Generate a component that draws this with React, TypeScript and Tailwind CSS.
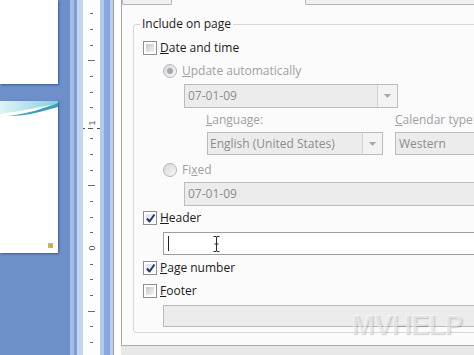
import React from 'react';

const Check = ({ checked }: { checked?: boolean }) => (
  <span className="relative flex h-[14px] w-[14px] shrink-0 border border-[#8e8f8f] bg-white p-[2px]">
    <span
      className={`h-full w-full ${
        checked ? 'bg-linear-to-br from-[#d9e2ee] to-[#f7f9fb]' : 'bg-linear-to-br from-[#c3c8cf] to-[#f3f4f5]'
      }`}
    />
    {checked && (
      <svg className="absolute left-[1px] top-[1px]" width="11" height="11" viewBox="0 0 11 11">
        <path d="M2 5.5 L4.5 8.5 L9.5 1.5" fill="none" stroke="#24356b" strokeWidth="2" strokeLinejoin="round" />
      </svg>
    )}
  </span>
);

const Radio = ({ on }: { on?: boolean }) => (
  <span className="flex h-[14px] w-[14px] shrink-0 items-center justify-center rounded-full border border-[#b4b6b9] bg-linear-to-br from-[#d6d8db] to-[#f8f8f8]">
    {on && <span className="h-[6px] w-[6px] rounded-full bg-[#a3a7ac]" />}
  </span>
);

const Arrow = () => (
  <span className="flex w-[20px] shrink-0 items-center justify-center border-l border-[#d3d3d3] bg-[#f3f3f3]">
    <svg width="7" height="4" viewBox="0 0 7 4">
      <path d="M0 0 H7 L3.5 4 Z" fill="#a6a6a6" />
    </svg>
  </span>
);

const Ruler = () => {
  const ticks = [];
  for (let k = -6; k <= 15; k++) {
    if (k === 0 || k === 8) continue;
    const y = Math.round(248 - k * 15.65) + 0.5;
    const long = k === 4 || k === 12 || k === -4;
    ticks.push(
      <line key={k} x1={long ? 5 : 7} x2={long ? 12 : 10} y1={y} y2={y} stroke="#6b6b6b" strokeWidth="1" />
    );
  }
  return (
    <svg width="17" height="355" className="shrink-0">
      <rect width="17" height="355" fill="#fcfdfe" />
      {ticks}
      <text x="0" y="0" transform="translate(12 123) rotate(-90)" fontSize="9" fill="#555" fontFamily="Liberation Sans, sans-serif" textAnchor="middle">
        1
      </text>
      <path d="M0 128.5 H2 M5 128.5 H10 M14 128.5 H17" stroke="#555" strokeWidth="1" />
      <text x="0" y="0" transform="translate(12 248) rotate(-90)" fontSize="9" fill="#555" fontFamily="Liberation Sans, sans-serif" textAnchor="middle">
        0
      </text>
    </svg>
  );
};

const dim = 'text-[#a0a0a0]';

export default function App() {
  return (
    <div className="relative flex h-[355px] w-[474px] overflow-hidden bg-[#fbfbfb] font-['Open_Sans','Noto_Sans',sans-serif] text-[12px] leading-[16px] text-[#1b1b1b]">
      {/* slide thumbnails */}
      <div className="flex w-[70px] shrink-0 flex-col bg-[#6d8fca]">
        <div className="h-[84px] w-[58px] bg-white shadow-[1px_1px_2px_rgba(20,40,90,0.5)]" />
        <div className="relative mt-[17px] h-[152px] w-[58px] overflow-hidden bg-white shadow-[1px_1px_2px_rgba(20,40,90,0.5)]">
          <svg width="58" height="20" viewBox="0 0 58 20">
            <defs>
              <linearGradient id="wv" x1="0" x2="1" y1="0" y2="0">
                <stop offset="0" stopColor="#dff4f7" />
                <stop offset="1" stopColor="#86cfdf" />
              </linearGradient>
            </defs>
            <path d="M0 0 H58 V3 C42 5 24 10 0 13 Z" fill="url(#wv)" />
            <path d="M8 15 C28 13 44 7 58 2 V6 C44 10 28 15 8 15 Z" fill="#3b9fbb" />
          </svg>
          <span className="absolute bottom-[5px] right-[5px] h-[5px] w-[5px] rounded-[1px] bg-[#c9b24a]" />
        </div>
      </div>
      <div className="w-[4px] shrink-0 bg-[#a3bde5]" />
      <div className="w-[3px] shrink-0 bg-[#7c9dd5]" />
      <div className="w-[6px] shrink-0 bg-[#c3d5ef]" />
      <Ruler />
      <div className="w-[4px] shrink-0 bg-[#b5cbeb]" />
      <div className="w-[6px] shrink-0 bg-[#86a8dd]" />
      <div className="w-[3px] shrink-0 bg-[#b9cdec]" />

      {/* dialog */}
      <div className="w-[1px] shrink-0 bg-[#9d9d9d]" />
      <div className="w-[7px] shrink-0 bg-white" />
      <div className="flex min-w-0 flex-1 flex-col">
        <div className="flex h-[346px] flex-col border-b border-l border-[#a9a9a9] bg-[#fbfbfb]">
          <div className="flex h-[5px]">
            <div className="w-[50px] rounded-b-[2px] border-x border-b border-[#b3b3b3] bg-[#f0f0f0]" />
            <div className="ml-[133px] flex-1 rounded-bl-[2px] border-b border-l border-[#b3b3b3] bg-[#f0f0f0]" />
          </div>

          {/* Include on page group */}
          <div className="relative -mr-[20px] ml-[11px] mt-[19px] flex h-[309px] flex-col rounded-[3px] border border-[#d6d6d6]">
            <span className="absolute left-[6px] top-[-9px] bg-[#fbfbfb] px-[2px]">Include on page</span>

            <div className="mt-[15px] flex h-[16px] items-center pl-[9px]">
              <Check />
              <span className="ml-[3px]">
                <u>D</u>ate and time
              </span>
            </div>

            <div className="mt-[7px] flex h-[16px] items-center pl-[29px]">
              <Radio on />
              <span className={`ml-[5px] ${dim}`}>
                <u>U</u>pdate automatically
              </span>
            </div>

            <div className="ml-[50px] mt-[5px] flex h-[24px] w-[214px] border border-[#bcbcbc] bg-[#ececec]">
              <span className="flex-1 pl-[3px] leading-[22px] text-[#8c8c8c]">07-01-09</span>
              <Arrow />
            </div>

            <div className={`mt-[4px] flex h-[16px] items-center pl-[72px] ${dim}`}>
              <span className="w-[189px]">
                <u>L</u>anguage:
              </span>
              <span>
                <u>C</u>alendar type:
              </span>
            </div>

            <div className="mt-[4px] flex h-[23px] pl-[73px]">
              <div className="flex w-[176px] border border-[#bcbcbc] bg-[#ececec]">
                <span className="flex-1 pl-[2px] leading-[21px] text-[#8c8c8c]">English (United States)</span>
                <Arrow />
              </div>
              <div className="ml-[12px] flex-1 border border-[#bcbcbc] bg-[#ececec] pl-[3px] leading-[21px] text-[#8c8c8c]">
                Western
              </div>
            </div>

            <div className="mt-[7px] flex h-[16px] items-center pl-[29px]">
              <Radio />
              <span className={`ml-[5px] ${dim}`}>
                Fi<u>x</u>ed
              </span>
            </div>

            <div className="ml-[50px] mt-[4px] h-[24px] border border-[#bcbcbc] bg-[#ececec] pl-[3px] leading-[22px] text-[#8c8c8c]">
              07-01-09
            </div>

            <div className="mt-[4px] flex h-[16px] items-center pl-[9px]">
              <Check checked />
              <span className="ml-[3px]">
                <u>H</u>eader
              </span>
            </div>

            <div className="relative ml-[29px] mt-[6px] h-[23px] border border-[#9a9ea6] bg-white">
              <span className="absolute left-[4px] top-[3px] h-[15px] w-[1px] bg-[#222]" />
              <svg className="absolute left-[49px] top-[3px]" width="7" height="16" viewBox="0 0 7 16">
                <path d="M0.5 0.5 H3 L3.5 1 L4 0.5 H6.5 M3.5 1 V15 M0.5 15.5 H3 L3.5 15 L4 15.5 H6.5 M1.5 8 H5.5" fill="none" stroke="#2a2a2a" strokeWidth="1" />
              </svg>
            </div>

            <div className="mt-[5px] flex h-[16px] items-center pl-[9px]">
              <Check checked />
              <span className="ml-[3px]">
                <u>P</u>age number
              </span>
            </div>

            <div className="mt-[7px] flex h-[16px] items-center pl-[9px]">
              <Check />
              <span className="ml-[3px]">
                <u>F</u>ooter
              </span>
            </div>

            <div className="ml-[29px] mt-[6px] h-[22px] border border-[#bcbcbc] bg-[#ececec]" />
          </div>
        </div>
        <div className="flex-1 bg-[#e8e8e8]" />
      </div>

      <span className="absolute bottom-[16px] right-[12px] font-['Liberation_Sans',sans-serif] text-[28px] font-bold leading-[28px] tracking-[-1px] text-[rgba(255,255,255,0.55)] [text-shadow:1px_1px_1px_rgba(0,0,0,0.18)]">
        MVHELP
      </span>
    </div>
  );
}
